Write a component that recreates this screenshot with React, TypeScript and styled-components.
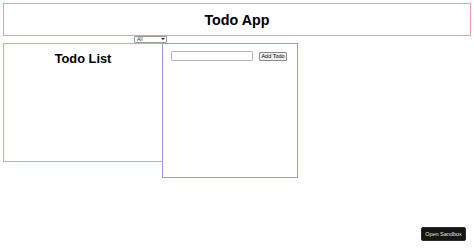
import React, { useState } from 'react';
import styled, { createGlobalStyle } from 'styled-components';

const GlobalStyle = createGlobalStyle`
  html, body {
    margin: 0;
    padding: 0;
    background: #ffffff;
    font-family: "Liberation Sans", Arial, sans-serif;
  }
`;

type Filter = 'all' | 'active' | 'completed';

export default function App(): JSX.Element {
  const [filter, setFilter] = useState<Filter>('all');
  const [text, setText] = useState('');
  const [todos, setTodos] = useState<string[]>([]);

  const addTodo = () => {
    if (!text.trim()) return;
    setTodos([...todos, text.trim()]);
    setText('');
  };

  return (
    <>
      <GlobalStyle />
      <Header>
        <Title>Todo App</Title>
      </Header>
      <Board>
        <FilterRow>
          <SelectWrap>
            <FilterSelect
              value={filter}
              onChange={(e) => setFilter(e.target.value as Filter)}
            >
              <option value='all'>All</option>
              <option value='active'>Active</option>
              <option value='completed'>Completed</option>
            </FilterSelect>
          </SelectWrap>
        </FilterRow>
        <Panels>
          <ListPanel>
            <ListTitle>Todo List</ListTitle>
            {todos.map((todo) => (
              <TodoItem key={todo}>{todo}</TodoItem>
            ))}
          </ListPanel>
          <FormPanel>
            <FormRow>
              <TodoInput
                value={text}
                onChange={(e) => setText(e.target.value)}
              />
              <AddButton onClick={addTodo}>Add Todo</AddButton>
            </FormRow>
          </FormPanel>
        </Panels>
      </Board>
      <SandboxButton>Open Sandbox</SandboxButton>
    </>
  );
}

const Header = styled.header`
  margin: 3px 3px 0;
  height: 31px;
  border: 1px solid #ec98a6;
  display: flex;
  align-items: center;
  justify-content: center;
`;

const Title = styled.h1`
  margin: 0;
  font-size: 14.3px;
  font-weight: bold;
  color: #000;
`;

const Board = styled.div`
  display: inline-block;
  margin-left: 3px;
`;

const FilterRow = styled.div`
  display: flex;
  justify-content: center;
  height: 7px;
`;

const SelectWrap = styled.div`
  position: relative;
  width: 33px;
  height: 7px;

  &::after {
    content: '';
    position: absolute;
    right: 2px;
    top: 2px;
    border-left: 2px solid transparent;
    border-right: 2px solid transparent;
    border-top: 2.5px solid #222;
    pointer-events: none;
  }
`;

const FilterSelect = styled.select`
  appearance: none;
  display: block;
  width: 33px;
  height: 7px;
  padding: 0 0 0 2px;
  font-size: 5px;
  line-height: 5px;
  color: #333;
  font-family: "Liberation Sans", Arial, sans-serif;
  border: 1px solid #9a9a9a;
  border-radius: 1px;
  background: #fff;
  box-sizing: border-box;
`;

const Panels = styled.div`
  display: flex;
  align-items: flex-start;
`;

const ListPanel = styled.section`
  width: 159px;
  height: 119px;
  box-sizing: border-box;
  border: 1px solid #94cc9e;
  border-right: none;
  text-align: center;
`;

const ListTitle = styled.h2`
  margin: 7px 0 0;
  font-size: 12.8px;
  font-weight: bold;
  color: #000;
`;

const TodoItem = styled.div`
  font-size: 6px;
  text-align: left;
  padding: 2px 8px;
`;

const FormPanel = styled.section`
  width: 136px;
  height: 135px;
  box-sizing: border-box;
  border: 1px solid #9a9ae2;
  padding: 7px 8px;
`;

const FormRow = styled.div`
  display: flex;
  align-items: center;
  gap: 6px;
`;

const TodoInput = styled.input`
  width: 82px;
  height: 10px;
  box-sizing: border-box;
  padding: 0 2px;
  font-size: 6px;
  border: 1px solid #b4b4b4;
  border-radius: 1px;
`;

const AddButton = styled.button`
  width: 28px;
  height: 9px;
  box-sizing: border-box;
  padding: 0;
  font-size: 5.5px;
  font-family: "Liberation Sans", Arial, sans-serif;
  color: #000;
  background: #efefef;
  border: 1px solid #8a8a8a;
  border-radius: 1px;
`;

const SandboxButton = styled.button`
  position: fixed;
  right: 8px;
  bottom: 7px;
  width: 45px;
  height: 14px;
  padding: 0;
  font-size: 5.5px;
  font-family: "Liberation Sans", Arial, sans-serif;
  color: #e0e0e0;
  background: #151515;
  border: 1px solid #2c2c2c;
  border-radius: 2px;
`;
